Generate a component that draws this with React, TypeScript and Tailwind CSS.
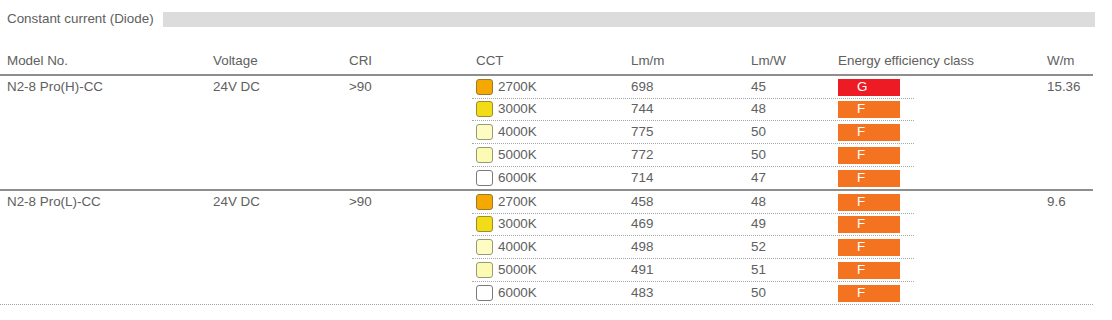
const font = { fontFamily: '"Liberation Sans", Arial, sans-serif' };

type Row = { cct: string; lmm: number; lmw: number; cls: string };
type Group = { model: string; voltage: string; cri: string; wm: string; rows: Row[]; last?: boolean };

const swatch: Record<string, string> = {
  "2700K": "bg-[#f5a900] border-[#9a7a2c]",
  "3000K": "bg-[#f2dc17] border-[#9c8c2e]",
  "4000K": "bg-[#fdfdc3] border-[#98987a]",
  "5000K": "bg-[#fbfbb3] border-[#98987a]",
  "6000K": "bg-white border-[#7a7a7a]",
};

const heights = ["h-[23px]", "h-[22px]", "h-[23px]", "h-[23px]", "h-[22px]"];

const groups: Group[] = [
  {
    model: "N2-8 Pro(H)-CC",
    voltage: "24V DC",
    cri: ">90",
    wm: "15.36",
    rows: [
      { cct: "2700K", lmm: 698, lmw: 45, cls: "G" },
      { cct: "3000K", lmm: 744, lmw: 48, cls: "F" },
      { cct: "4000K", lmm: 775, lmw: 50, cls: "F" },
      { cct: "5000K", lmm: 772, lmw: 50, cls: "F" },
      { cct: "6000K", lmm: 714, lmw: 47, cls: "F" },
    ],
  },
  {
    model: "N2-8 Pro(L)-CC",
    voltage: "24V DC",
    cri: ">90",
    wm: "9.6",
    last: true,
    rows: [
      { cct: "2700K", lmm: 458, lmw: 48, cls: "F" },
      { cct: "3000K", lmm: 469, lmw: 49, cls: "F" },
      { cct: "4000K", lmm: 498, lmw: 52, cls: "F" },
      { cct: "5000K", lmm: 491, lmw: 51, cls: "F" },
      { cct: "6000K", lmm: 483, lmw: 50, cls: "F" },
    ],
  },
];

function GroupBlock({ g }: { g: Group }) {
  return (
    <div
      className={
        g.last
          ? "flex border-b border-dotted border-[#a3a3a3]"
          : "flex border-b-2 border-[#8e8e8e]"
      }
    >
      <div className="w-[213px] pl-[7px] h-[23px] flex items-center">{g.model}</div>
      <div className="w-[136px] h-[23px] flex items-center">{g.voltage}</div>
      <div className="w-[123px] h-[23px] flex items-center">{g.cri}</div>
      <div className="w-[442px] flex flex-col">
        {g.rows.map((r, i) => (
          <div
            key={r.cct}
            className={
              "flex items-center " +
              heights[i] +
              (i < 4 ? " border-b border-dotted border-[#a8a8a8]" : "")
            }
          >
            <div className="w-[159px] pl-[4px] flex items-center gap-[5px]">
              <span className={"w-[17px] h-[16px] rounded-[3px] border " + swatch[r.cct]} />
              <span>{r.cct}</span>
            </div>
            <div className="w-[120px]">{r.lmm}</div>
            <div className="w-[87px]">{r.lmw}</div>
            <div
              className={
                "w-[62px] h-[17px] pl-[19px] flex items-center text-white " +
                (r.cls === "G" ? "bg-[#ed1c24]" : "bg-[#f37321]")
              }
            >
              {r.cls}
            </div>
          </div>
        ))}
      </div>
      <div className="flex-1 pl-[133px] h-[23px] flex items-center">{g.wm}</div>
    </div>
  );
}

export default function App() {
  return (
    <div className="w-[1112px] h-[320px] bg-white text-[13.4px] text-[#606060] pt-[12px]" style={font}>
      <div className="flex items-center h-[15px]">
        <span className="pl-[7px] w-[163px]">Constant current (Diode)</span>
        <div className="h-[15px] w-[932px] bg-[#dcdcdd]" />
      </div>
      <div className="w-[1093px] mt-[22px]">
        <div className="flex items-center h-[27px] border-b-2 border-[#8e8e8e]">
          <div className="w-[213px] pl-[7px]">Model No.</div>
          <div className="w-[136px]">Voltage</div>
          <div className="w-[123px]">CRI</div>
          <div className="w-[159px] pl-[4px]">CCT</div>
          <div className="w-[120px]">Lm/m</div>
          <div className="w-[87px]">Lm/W</div>
          <div className="w-[209px]">Energy efficiency class</div>
          <div className="flex-1">W/m</div>
        </div>
        {groups.map((g) => (
          <GroupBlock key={g.model} g={g} />
        ))}
      </div>
    </div>
  );
}
